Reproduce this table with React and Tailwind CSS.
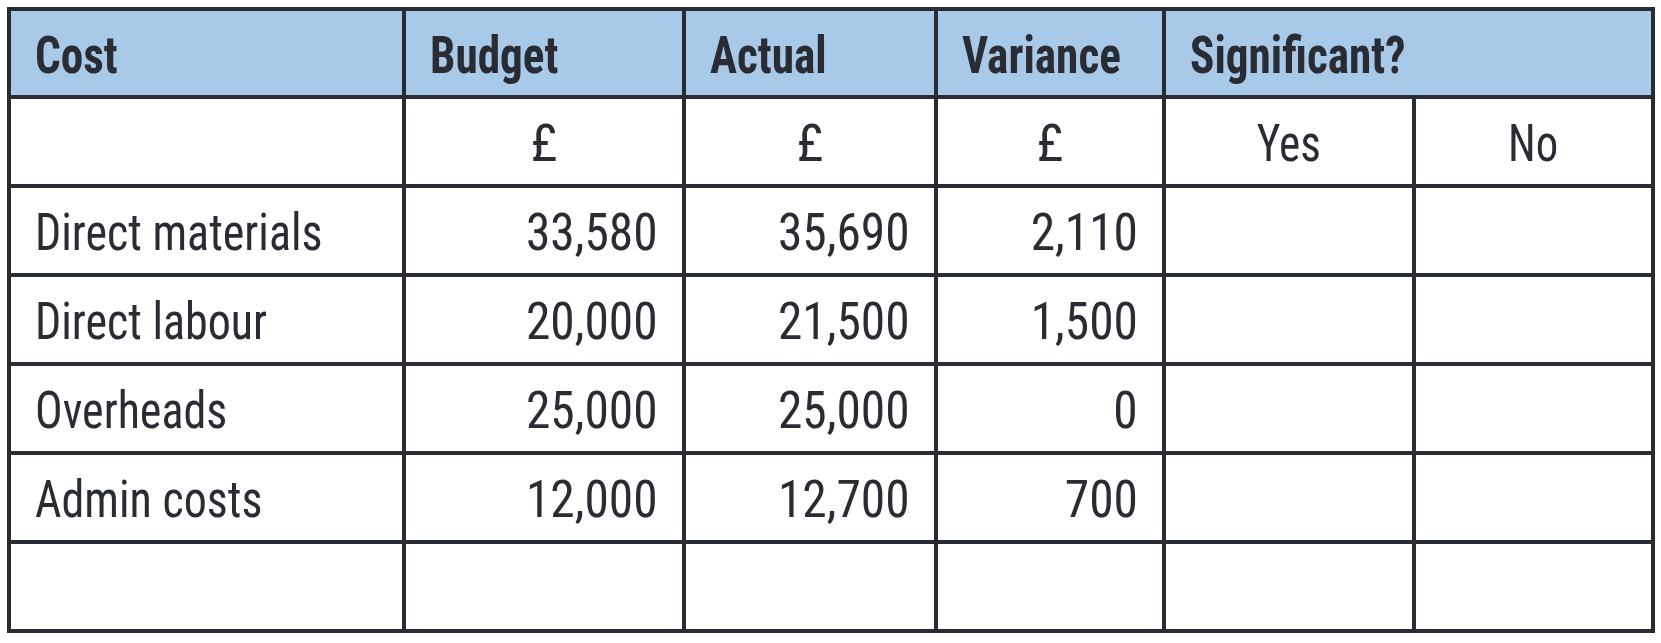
import React from 'react';

const rows = [
  { cost: 'Direct materials', budget: '33,580', actual: '35,690', variance: '2,110' },
  { cost: 'Direct labour', budget: '20,000', actual: '21,500', variance: '1,500' },
  { cost: 'Overheads', budget: '25,000', actual: '25,000', variance: '0' },
  { cost: 'Admin costs', budget: '12,000', actual: '12,700', variance: '700' },
  { cost: '', budget: '', actual: '', variance: '' },
];

// cells sit on the dark grid background, the gap draws the rules
const cell = 'bg-white flex items-center px-6 pt-[5px] h-[85px]';
const head = 'bg-[#a9c9e8] flex items-center px-6 pt-[5px] h-[84px] font-bold';

function Txt({ children, origin = 'origin-left', scale = 'scale-x-[0.885]' }) {
  return <span className={`inline-block whitespace-nowrap ${scale} ${origin}`}>{children}</span>;
}

export default function App() {
  return (
    <div className="w-[1661px] h-[643px] bg-white pt-[7px] pl-[7px] text-[52px] leading-none text-[#2a2c34] font-['Roboto_Condensed','Liberation_Sans_Narrow','Roboto',sans-serif]">
      <div className="inline-grid grid-cols-[391px_276px_248px_224px_246px_235px] gap-[4px] p-[4px] bg-[#2a2c34]">
        <div className={head}><Txt scale="scale-x-[0.87]">Cost</Txt></div>
        <div className={head}><Txt scale="scale-x-[0.87]">Budget</Txt></div>
        <div className={head}><Txt scale="scale-x-[0.87]">Actual</Txt></div>
        <div className={head}><Txt scale="scale-x-[0.87]">Variance</Txt></div>
        <div className={`${head} col-span-2`}><Txt scale="scale-x-[0.87]">Significant?</Txt></div>

        <div className={cell}></div>
        <div className={`${cell} justify-center`}>£</div>
        <div className={`${cell} justify-center`}>£</div>
        <div className={`${cell} justify-center`}>£</div>
        <div className={`${cell} justify-center`}><Txt origin="origin-center" scale="scale-x-[0.87]">Yes</Txt></div>
        <div className={`${cell} justify-center`}><Txt origin="origin-center" scale="scale-x-[0.86]">No</Txt></div>

        {rows.map((r, i) => (
          <React.Fragment key={i}>
            <div className={cell}><Txt>{r.cost}</Txt></div>
            <div className={`${cell} justify-end`}><Txt origin="origin-right" scale="scale-x-[0.95]">{r.budget}</Txt></div>
            <div className={`${cell} justify-end`}><Txt origin="origin-right" scale="scale-x-[0.95]">{r.actual}</Txt></div>
            <div className={`${cell} justify-end`}><Txt origin="origin-right" scale="scale-x-[0.95]">{r.variance}</Txt></div>
            <div className={cell}></div>
            <div className={cell}></div>
          </React.Fragment>
        ))}
      </div>
    </div>
  );
}
